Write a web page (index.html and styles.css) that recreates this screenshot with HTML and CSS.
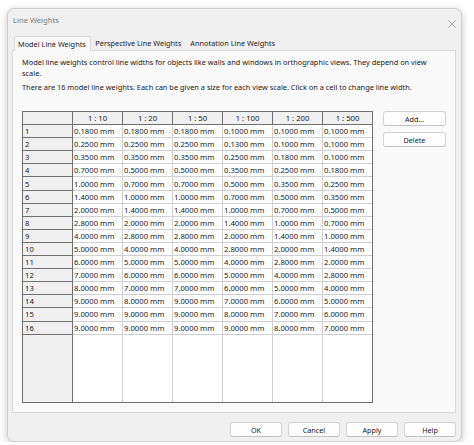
FILE: index.html
```html
<!DOCTYPE html>
<html>
<head>
<meta charset="utf-8">
<link rel="stylesheet" href="styles.css">
</head>
<body>
<div class="window">
  <div class="titlebar">
    <span class="title">Line Weights</span>
    <svg class="close" width="9" height="9" viewBox="0 0 9 9"><path d="M0.5 0.5 L8.5 8.5 M8.5 0.5 L0.5 8.5" stroke="#8a8a8a" stroke-width="0.9" fill="none"/></svg>
  </div>
  <div class="tabs">
    <div class="tab active">Model Line Weights</div>
    <div class="tab">Perspective Line Weights</div>
    <div class="tab">Annotation Line Weights</div>
  </div>
  <div class="panel">
    <p class="desc">Model line weights control line widths for objects like walls and windows in orthographic views. They depend on view scale.</p>
    <p class="desc second">There are 16 model line weights. Each can be given a size for each view scale. Click on a cell to change line width.</p>
    <div class="content">
      <div class="grid-wrap">
        <table class="grid">
          <colgroup><col class="c0"><col class="c"><col class="c"><col class="c"><col class="c"><col class="c"><col class="clast"></colgroup>
          <thead>
            <tr><th class="corner"></th><th>1 : 10</th><th>1 : 20</th><th>1 : 50</th><th>1 : 100</th><th>1 : 200</th><th class="last">1 : 500</th></tr>
          </thead>
          <tbody>
            <tr><th>1</th><td>0.1800 mm</td><td>0.1800 mm</td><td>0.1800 mm</td><td>0.1000 mm</td><td>0.1000 mm</td><td class="last">0.1000 mm</td></tr>
            <tr><th>2</th><td>0.2500 mm</td><td>0.2500 mm</td><td>0.2500 mm</td><td>0.1300 mm</td><td>0.1000 mm</td><td class="last">0.1000 mm</td></tr>
            <tr><th>3</th><td>0.3500 mm</td><td>0.3500 mm</td><td>0.3500 mm</td><td>0.2500 mm</td><td>0.1800 mm</td><td class="last">0.1000 mm</td></tr>
            <tr><th>4</th><td>0.7000 mm</td><td>0.5000 mm</td><td>0.5000 mm</td><td>0.3500 mm</td><td>0.2500 mm</td><td class="last">0.1800 mm</td></tr>
            <tr><th>5</th><td>1.0000 mm</td><td>0.7000 mm</td><td>0.7000 mm</td><td>0.5000 mm</td><td>0.3500 mm</td><td class="last">0.2500 mm</td></tr>
            <tr><th>6</th><td>1.4000 mm</td><td>1.0000 mm</td><td>1.0000 mm</td><td>0.7000 mm</td><td>0.5000 mm</td><td class="last">0.3500 mm</td></tr>
            <tr><th>7</th><td>2.0000 mm</td><td>1.4000 mm</td><td>1.4000 mm</td><td>1.0000 mm</td><td>0.7000 mm</td><td class="last">0.5000 mm</td></tr>
            <tr><th>8</th><td>2.8000 mm</td><td>2.0000 mm</td><td>2.0000 mm</td><td>1.4000 mm</td><td>1.0000 mm</td><td class="last">0.7000 mm</td></tr>
            <tr><th>9</th><td>4.0000 mm</td><td>2.8000 mm</td><td>2.8000 mm</td><td>2.0000 mm</td><td>1.4000 mm</td><td class="last">1.0000 mm</td></tr>
            <tr><th>10</th><td>5.0000 mm</td><td>4.0000 mm</td><td>4.0000 mm</td><td>2.8000 mm</td><td>2.0000 mm</td><td class="last">1.4000 mm</td></tr>
            <tr><th>11</th><td>6.0000 mm</td><td>5.0000 mm</td><td>5.0000 mm</td><td>4.0000 mm</td><td>2.8000 mm</td><td class="last">2.0000 mm</td></tr>
            <tr><th>12</th><td>7.0000 mm</td><td>6.0000 mm</td><td>6.0000 mm</td><td>5.0000 mm</td><td>4.0000 mm</td><td class="last">2.8000 mm</td></tr>
            <tr><th>13</th><td>8.0000 mm</td><td>7.0000 mm</td><td>7.0000 mm</td><td>6.0000 mm</td><td>5.0000 mm</td><td class="last">4.0000 mm</td></tr>
            <tr><th>14</th><td>9.0000 mm</td><td>8.0000 mm</td><td>9.0000 mm</td><td>7.0000 mm</td><td>6.0000 mm</td><td class="last">5.0000 mm</td></tr>
            <tr><th>15</th><td>9.0000 mm</td><td>9.0000 mm</td><td>9.0000 mm</td><td>8.0000 mm</td><td>7.0000 mm</td><td class="last">6.0000 mm</td></tr>
            <tr><th>16</th><td>9.0000 mm</td><td>9.0000 mm</td><td>9.0000 mm</td><td>9.0000 mm</td><td>8.0000 mm</td><td class="last">7.0000 mm</td></tr>
            <tr class="filler"><th></th><td></td><td></td><td></td><td></td><td></td><td class="last"></td></tr>
          </tbody>
        </table>
      </div>
      <div class="side-buttons">
        <button class="btn side">Add...</button>
        <button class="btn side">Delete</button>
      </div>
    </div>
  </div>
  <div class="footer">
    <button class="btn foot">OK</button>
    <button class="btn foot">Cancel</button>
    <button class="btn foot">Apply</button>
    <button class="btn foot">Help</button>
  </div>
</div>
</body>
</html>
```

FILE: styles.css
```css
* { box-sizing: border-box; }

html, body {
  margin: 0;
  padding: 0;
  background: #ffffff;
}

body {
  font-family: "Noto Sans", "Open Sans", sans-serif;
  color: #1a1a1a;
}

.window {
  margin: 8px 0 0 7px;
  width: 455px;
  height: 434px;
  background: #f0f0f0;
  border: 1px solid #cfcfcf;
  border-radius: 7px;
  box-shadow: 0 2px 9px rgba(0, 0, 0, 0.22);
  display: flex;
  flex-direction: column;
}

.titlebar {
  height: 27px;
  display: flex;
  align-items: flex-start;
  justify-content: space-between;
  padding: 5px 5px 0 5px;
}

.title {
  font-size: 7.6px;
  line-height: 12px;
  color: #7a7a7a;
}

.close {
  margin-top: 6px;
  width: 8px;
  height: 8px;
}

.tabs {
  display: flex;
  align-items: flex-end;
  height: 14px;
  margin-left: 6px;
  position: relative;
  z-index: 1;
}

.tab {
  height: 13px;
  padding: 0 4.5px;
  font-size: 7.35px;
  line-height: 13px;
  color: #1a1a1a;
}

.tab.active {
  height: 15px;
  margin-bottom: -1px;
  padding: 1px 4px 0 3px;
  background: #f9f9f9;
  border: 1px solid #dadada;
  border-bottom: none;
  border-radius: 2px 2px 0 0;
}

.panel {
  margin: 0 5px 0 4px;
  height: 363px;
  background: #f9f9f9;
  border: 1px solid #dadada;
  padding: 6px 9px 0 9px;
}

.desc {
  margin: 0;
  max-width: 406px;
  font-size: 7.4px;
  line-height: 11px;
  color: #1a1a1a;
}

.desc.second {
  margin-top: 2.5px;
  max-width: none;
}

.content {
  display: flex;
  align-items: flex-start;
  gap: 10px;
  margin-top: 18.5px;
}

.grid-wrap {
  width: 351px;
  height: 292px;
  border: 1px solid #6f6f6f;
  background: #ffffff;
  overflow: hidden;
}

.grid {
  table-layout: fixed;
  border-collapse: separate;
  border-spacing: 0;
  width: 349px;
  font-size: 7.7px;
  color: #1a1a1a;
}

.grid col.c0, .grid col.c { width: 50px; }
.grid col.clast { width: 49px; }

.grid th, .grid td {
  height: 13.1px;
  padding: 0 0 0 1px;
  line-height: 12px;
  white-space: nowrap;
  overflow: hidden;
  font-weight: normal;
  text-align: left;
}

.grid td {
  border-right: 1px solid #d0d0d0;
  border-bottom: 1px solid #d0d0d0;
  background: #ffffff;
}

.grid tbody th {
  background: #f0f0f0;
  border-right: 1px solid #6f6f6f;
  border-bottom: 1px solid #6f6f6f;
  padding-left: 2px;
}

.grid thead th {
  background: #f0f0f0;
  text-align: center;
  border-right: 1px solid #6f6f6f;
  border-bottom: 1px solid #6f6f6f;
  padding: 0;
}

.grid .last { border-right: none; }

.grid tr.filler td,
.grid tr.filler th {
  height: 68px;
  border-bottom: none;
}

.side-buttons {
  display: flex;
  flex-direction: column;
  gap: 6px;
}

.btn {
  font-family: "Noto Sans", "Open Sans", sans-serif;
  font-size: 7.2px;
  color: #1a1a1a;
  background: #fdfdfd;
  border: 1px solid #d3d3d3;
  border-bottom-color: #c2c2c2;
  border-radius: 3px;
  padding: 0;
  line-height: 12px;
}

.btn.side {
  width: 63px;
  height: 15px;
}

.footer {
  display: flex;
  justify-content: flex-end;
  gap: 6px;
  margin-top: 9px;
  padding-right: 5px;
}

.btn.foot {
  width: 52px;
  height: 15px;
}
```
